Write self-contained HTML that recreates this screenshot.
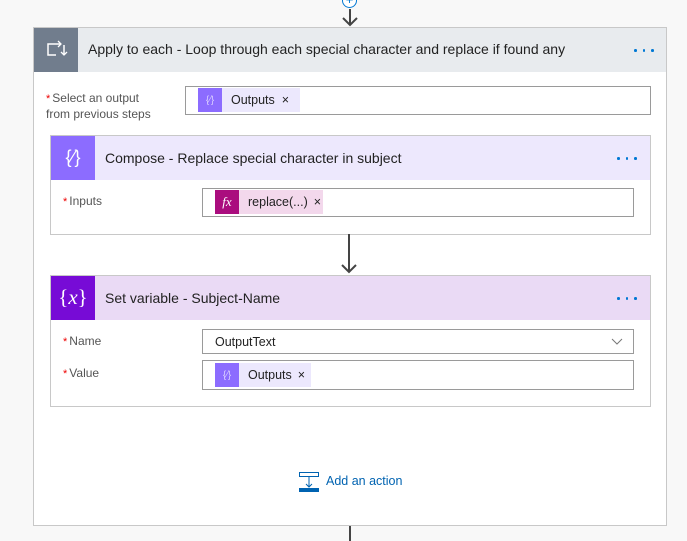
<!DOCTYPE html>
<html><head><style>
*{box-sizing:border-box;margin:0;padding:0}
body{width:687px;height:541px;background:#f8f8f8;font-family:"Segoe UI","Liberation Sans",sans-serif;font-size:13px;color:#222;position:relative;overflow:hidden}
.abs{position:absolute}
.dots{position:absolute;display:flex;gap:6px}
.dots i{width:2.5px;height:2.5px;background:#0078d4;border-radius:50%;display:block}
.box{position:absolute;border:1px solid #9a9a9a;background:#fff}
.tok{position:absolute;top:1px;height:24px;display:flex;align-items:center;font-size:12.5px;color:#222}
.tok .ic{width:24px;height:24px;display:flex;align-items:center;justify-content:center;color:#d8ccff;font-size:10px}
.lbl{position:absolute;font-size:12px;color:#555}
.lbl b{color:#e00;font-weight:normal;font-size:11px;margin-right:2px}
.card{position:absolute;background:#fff;border:1px solid #c8c8c8}
.ttl{position:absolute;font-size:14px;color:#222}
</style></head><body>
<div class="abs" style="left:342px;top:-7px;width:15px;height:15px;border:1px solid #0078d4;border-radius:50%;background:#fff;color:#0078d4;font-size:13px;line-height:12px;text-align:center">+</div>
<svg class="abs" style="left:340px;top:9px" width="20" height="20"><path d="M10 0V16M3 9L10 16L17 9" stroke="#444" stroke-width="2" fill="none"/></svg>
<div class="abs" style="left:33px;top:27px;width:634px;height:499px;background:#fff;border:1px solid #c8c8c8"></div>
<div class="abs" style="left:34px;top:28px;width:632px;height:44px;background:#e8ebee"></div>
<div class="abs" style="left:34px;top:28px;width:44px;height:44px;background:#717d8d"></div>
<svg class="abs" style="left:44px;top:38px" width="24" height="24"><path d="M17 6H4V17H12" stroke="#fff" stroke-width="1.5" fill="none"/><path d="M14 3L17 6L14 9" stroke="#fff" stroke-width="1.3" fill="none"/><path d="M20 7V17" stroke="#fff" stroke-width="1.5" fill="none"/><path d="M17 14L20 17L23 14" stroke="#fff" stroke-width="1.3" fill="none"/></svg>
<div class="ttl" style="left:88px;top:41px">Apply to each - Loop through each special character and replace if found any</div>
<div class="dots" style="left:634px;top:49px"><i></i><i></i><i></i></div>
<div class="lbl" style="left:46px;top:91px;line-height:15px"><b>*</b>Select an output<br>from previous steps</div>
<div class="box" style="left:185px;top:86px;width:466px;height:29px">
 <div class="tok" style="left:12px;background:#ece8fd;width:102px"><div class="ic" style="background:#8c6cff">{∕}</div><span style="margin-left:9px">Outputs</span><span style="margin-left:7px">×</span></div>
</div>
<div class="card" style="left:50px;top:135px;width:601px;height:100px"></div>
<div class="abs" style="left:51px;top:136px;width:599px;height:44px;background:#ede8fd"></div>
<div class="abs" style="left:51px;top:136px;width:44px;height:44px;background:#8c6cff;color:#fff;font-size:18px;text-align:center;line-height:42px">{∕}</div>
<div class="ttl" style="left:105px;top:150px">Compose - Replace special character in subject</div>
<div class="dots" style="left:617px;top:157px"><i></i><i></i><i></i></div>
<div class="lbl" style="left:63px;top:194px"><b>*</b>Inputs</div>
<div class="box" style="left:202px;top:188px;width:432px;height:29px">
 <div class="tok" style="left:12px;background:#f3d8ec;width:108px"><div class="ic" style="background:#aa0d7e;color:#fff;font-family:'Liberation Serif',serif;font-style:italic;font-size:13px">fx</div><span style="margin-left:9px">replace(...)</span><span style="margin-left:6px">×</span></div>
</div>
<svg class="abs" style="left:339px;top:234px" width="20" height="40"><path d="M10 0V38M3 31L10 38L17 31" stroke="#444" stroke-width="2" fill="none"/></svg>
<div class="card" style="left:50px;top:275px;width:601px;height:132px"></div>
<div class="abs" style="left:51px;top:276px;width:599px;height:44px;background:#eadaf5"></div>
<div class="abs" style="left:51px;top:276px;width:44px;height:44px;background:#770bd6;color:#fff;font-size:21px;text-align:center;line-height:42px;font-family:'Liberation Serif',serif">{<i>x</i>}</div>
<div class="ttl" style="left:105px;top:290px">Set variable - Subject-Name</div>
<div class="dots" style="left:617px;top:297px"><i></i><i></i><i></i></div>
<div class="lbl" style="left:63px;top:334px"><b>*</b>Name</div>
<div class="box" style="left:202px;top:329px;width:432px;height:25px;font-size:12.5px;padding:5px 0 0 12px">OutputText
 <svg class="abs" style="right:10px;top:8px" width="12" height="8"><path d="M1 1L6 6L11 1" stroke="#777" fill="none"/></svg></div>
<div class="lbl" style="left:63px;top:366px"><b>*</b>Value</div>
<div class="box" style="left:202px;top:360px;width:432px;height:30px">
 <div class="tok" style="left:12px;top:2px;background:#ece8fd;width:96px"><div class="ic" style="background:#8c6cff">{∕}</div><span style="margin-left:9px">Outputs</span><span style="margin-left:6px">×</span></div>
</div>
<svg class="abs" style="left:299px;top:472px" width="21" height="20"><rect x="0.5" y="0.5" width="19" height="4" stroke="#0063b1" fill="none"/><path d="M10 5V15M7 12L10 15L13 12" stroke="#0063b1" fill="none"/><rect x="0" y="16" width="20" height="4" fill="#0063b1"/></svg>
<div class="abs" style="left:326px;top:474px;color:#0063b1;font-size:12.5px">Add an action</div>
<div class="abs" style="left:349px;top:526px;width:2px;height:15px;background:#444"></div>
</body></html>
